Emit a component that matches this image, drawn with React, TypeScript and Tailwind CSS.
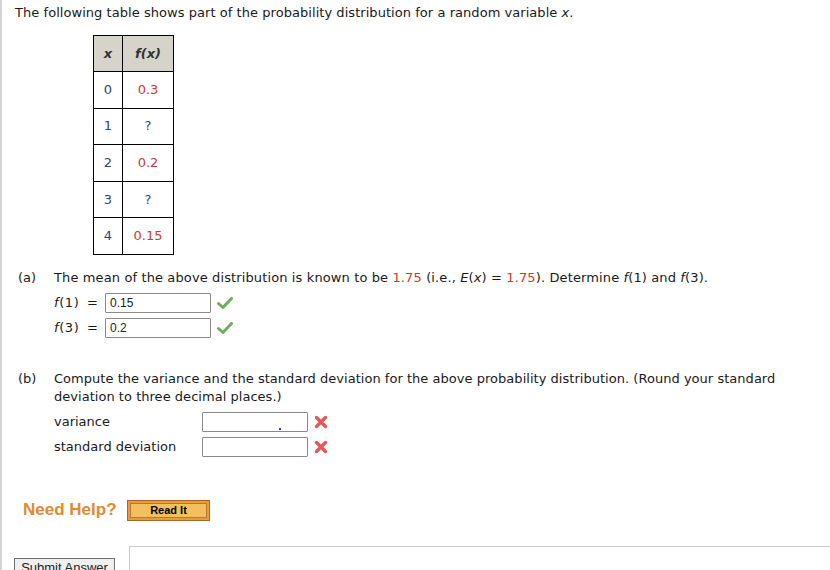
import React from 'react'

const red = 'text-[#cf3a2b]'

function Check() {
  return (
    <svg width="16" height="12" viewBox="0 0 16 12" className="ml-[6px]">
      <path d="M1.5 6.5 L6 10.5 L14.5 1.5" fill="none" stroke="#6fae5e" strokeWidth="3" strokeLinecap="round" strokeLinejoin="round" />
    </svg>
  )
}

function Cross() {
  return (
    <svg width="14" height="14" viewBox="0 0 14 14" className="ml-[6px]">
      <path d="M2.5 2.5 L11.5 11.5 M11.5 2.5 L2.5 11.5" fill="none" stroke="#e05a5a" strokeWidth="3.4" strokeLinecap="round" />
    </svg>
  )
}

function Field({ value, dot }: { value?: string; dot?: boolean }) {
  return (
    <div className="relative w-[106px] h-[20px] border border-[#8a8a8a] bg-white rounded-[1px] flex items-center pl-[4px] text-[12px] font-['Liberation_Sans',Arial,sans-serif] text-[#222]">
      {value}
      {dot && <span className="absolute left-[76px] top-[15px] w-[2px] h-[2px] bg-[#2040e0]" />}
    </div>
  )
}

const rows: { x: string; f: string; known: boolean }[] = [
  { x: '0', f: '0.3', known: true },
  { x: '1', f: '?', known: false },
  { x: '2', f: '0.2', known: true },
  { x: '3', f: '?', known: false },
  { x: '4', f: '0.15', known: true },
]

export default function App() {
  return (
    <div className="h-[570px] w-[830px] overflow-hidden bg-white border-l-2 border-[#d4d4d4] font-['DejaVu_Sans',Verdana,sans-serif] text-[13px] leading-[18px] text-[#1a1a1a]">
      {/* Intro */}
      <p className="pl-[13px] pt-[4px] tracking-[0.05px]">
        The following table shows part of the probability distribution for a random variable <i>x</i>.
      </p>

      {/* Table */}
      <table className="ml-[91px] mt-[13px] border-collapse text-center">
        <thead>
          <tr className="h-[36px] bg-[#d6d3cb]">
            <th className="w-[29px] border border-black font-bold italic text-[#333]">x</th>
            <th className="w-[51px] border border-black font-bold italic text-[#333]">f(x)</th>
          </tr>
        </thead>
        <tbody>
          {rows.map((r) => (
            <tr key={r.x} className="h-[36.6px]">
              <td className="border border-black text-[#2d4566]">{r.x}</td>
              <td className={'border border-black ' + (r.known ? red : 'text-[#2d4566]')}>{r.f}</td>
            </tr>
          ))}
        </tbody>
      </table>

      {/* Part (a) */}
      <div className="flex mt-[14px] pl-[16px]">
        <span className="w-[36px]">(a)</span>
        <div className="flex flex-col">
          <p className="tracking-[0.12px]">
            The mean of the above distribution is known to be <span className={red}>1.75</span> (i.e., <i>E</i>(<i>x</i>) ={' '}
            <span className={red}>1.75</span>). Determine <i>f</i>(1) and <i>f</i>(3).
          </p>
          <div className="flex items-center mt-[6px]">
            <span className="w-[33px] tracking-[0.6px]"><i>f</i>(1)</span>
            <span className="w-[18px]">=</span>
            <Field value="0.15" />
            <Check />
          </div>
          <div className="flex items-center mt-[5px]">
            <span className="w-[33px] tracking-[0.6px]"><i>f</i>(3)</span>
            <span className="w-[18px]">=</span>
            <Field value="0.2" />
            <Check />
          </div>
        </div>
      </div>

      {/* Part (b) */}
      <div className="flex mt-[32px] pl-[16px]">
        <span className="w-[36px]">(b)</span>
        <div className="flex flex-col">
          <p className="w-[740px] tracking-[0.03px]">
            Compute the variance and the standard deviation for the above probability distribution. (Round your standard deviation to three decimal places.)
          </p>
          <div className="flex items-center mt-[6px]">
            <span className="w-[148px]">variance</span>
            <Field dot />
            <Cross />
          </div>
          <div className="flex items-center mt-[5px]">
            <span className="w-[148px]">standard deviation</span>
            <Field />
            <Cross />
          </div>
        </div>
      </div>

      {/* Help */}
      <div className="flex items-center mt-[43px] pl-[21px] font-['Liberation_Sans',Arial,sans-serif]">
        <span className="text-[17px] font-bold text-[#e08a32] w-[104px]">Need Help?</span>
        <button className="w-[83px] h-[21px] border border-[#a8672a] bg-[#e99c3f] p-[2px]">
          <span className="flex items-center justify-center h-full border border-[#b9782f] bg-[#f4c05f] text-[11px] font-bold text-black">
            Read It
          </span>
        </button>
      </div>

      {/* Submit */}
      <div className="flex items-start mt-[25px]">
        <button className="mt-[12px] ml-[12px] w-[101px] h-[22px] border border-[#707070] bg-[#efefef] pt-[1px] text-[13px] leading-[16px] font-['Liberation_Sans',Arial,sans-serif] text-[#222] flex justify-center items-start">
          Submit Answer
        </button>
        <div className="ml-[14px] flex-1 h-[40px] border-t border-l border-[#cccccc]" />
      </div>
    </div>
  )
}
